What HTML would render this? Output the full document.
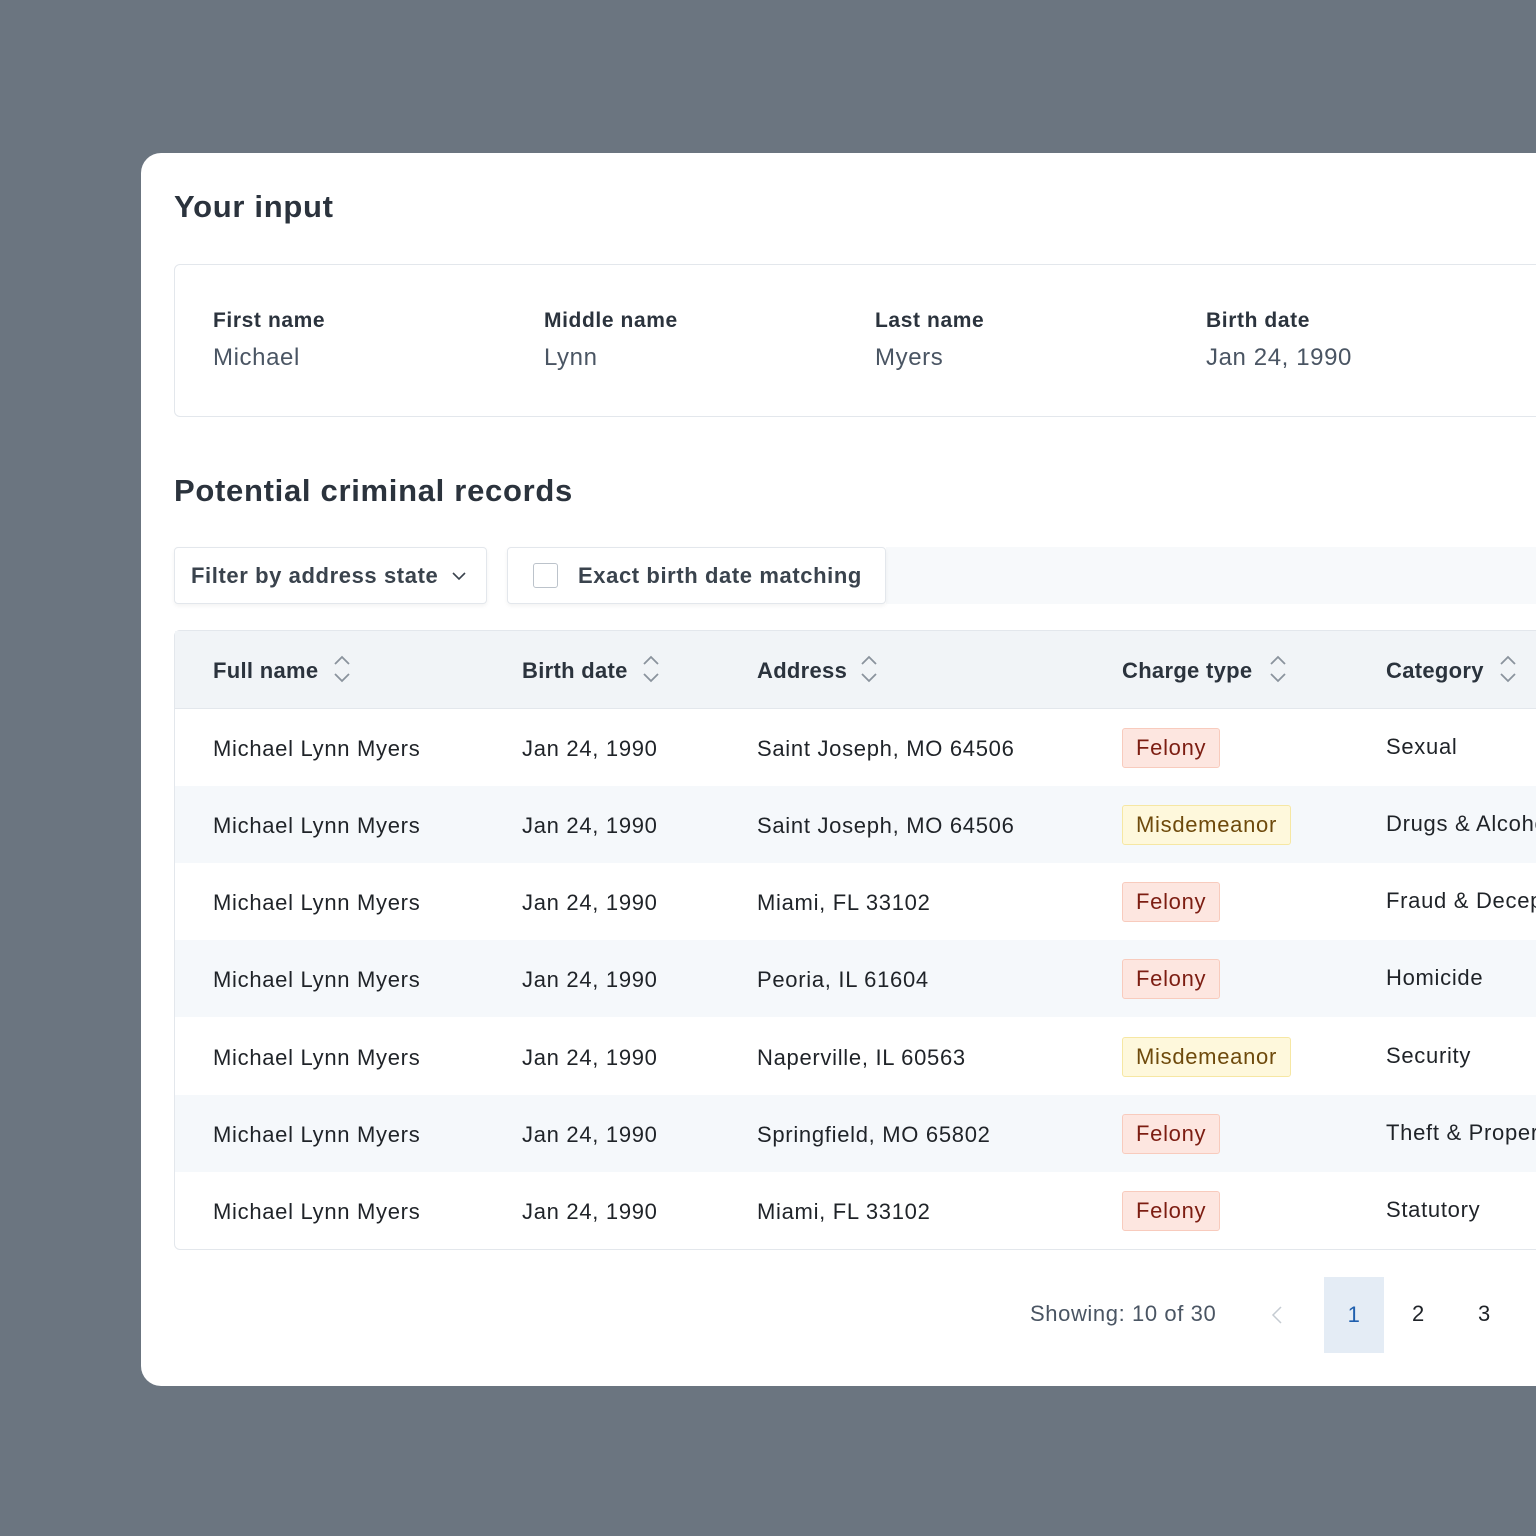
<!DOCTYPE html><html><head><style>
*{margin:0;padding:0;box-sizing:border-box}
body{width:1536px;height:1536px;background:#6b7580;position:relative;overflow:hidden;font-family:"Liberation Sans",sans-serif;color:#1f2328;letter-spacing:0.6px}
.card{position:absolute;left:141px;top:153px;width:1420px;height:1233px;background:#fff;border-radius:20px}
.a{position:absolute;white-space:nowrap}
h2{position:absolute;font-size:31px;font-weight:700;color:#2b333d;letter-spacing:0.7px}
.lbl{font-size:21px;font-weight:700;color:#2b333d}
.val{font-size:24px;color:#4a5563}
.btn{position:absolute;top:547px;height:57px;border:1.5px solid #e3e7ec;border-radius:4px;background:#fff;box-shadow:0 2px 4px rgba(0,0,0,.05);font-size:22px;font-weight:700;color:#3a434d}
.row{position:absolute;left:175px;width:1400px;height:77px;font-size:22px;letter-spacing:0.7px;white-space:nowrap}
.row span{position:absolute;top:27px;white-space:nowrap}
.tag{position:absolute;top:19px;height:40px;border-radius:3px;padding:0 13px;line-height:38px;font-size:22px}
.f{background:#fde6e0;border:1.5px solid #f8cbbd;color:#7c1d12}
.m{background:#fef8dc;border:1.5px solid #f6e7a3;color:#6e4a0c}
.th{position:absolute;top:27px;font-size:22px;font-weight:700;color:#2b333d;letter-spacing:0.3px}
.s{position:absolute;top:22px}
</style></head><body>
<div class="card"></div>
<h2 style="left:174px;top:189px">Your input</h2>
<div class="a" style="left:174px;top:264px;width:1400px;height:153px;border:1.5px solid #e3e7ec;border-radius:6px"></div>
<div class="a lbl" style="left:213px;top:309px">First name</div><div class="a val" style="left:213px;top:344px">Michael</div>
<div class="a lbl" style="left:544px;top:309px">Middle name</div><div class="a val" style="left:544px;top:344px">Lynn</div>
<div class="a lbl" style="left:875px;top:309px">Last name</div><div class="a val" style="left:875px;top:344px">Myers</div>
<div class="a lbl" style="left:1206px;top:309px">Birth date</div><div class="a val" style="left:1206px;top:344px">Jan 24, 1990</div>
<h2 style="left:174px;top:473px">Potential criminal records</h2>
<div class="a" style="left:886px;top:547px;width:700px;height:57px;background:#f7f9fb"></div>
<div class="btn" style="left:174px;width:313px"><span class="a" style="left:16px;top:15px">Filter by address state</span>
<svg class="a" style="left:276px;top:22px" width="16" height="12"><path d="M2 3l6 6 6-6" fill="none" stroke="#3a434d" stroke-width="1.6"/></svg></div>
<div class="btn" style="left:507px;width:379px"><div class="a" style="left:25px;top:15px;width:25px;height:25px;border:1.5px solid #bcc3cb;border-radius:3px"></div><span class="a" style="left:70px;top:15px">Exact birth date matching</span></div>
<div class="a" style="left:174px;top:630px;width:1400px;height:620px;border:1.5px solid #e3e7ec;border-radius:6px"></div>
<div class="row" style="top:631px;background:#f1f4f7;border-bottom:1.5px solid #e3e7ec;height:78px">
<span class="th" style="left:38px">Full name</span><svg class="s" style="left:157px" width="20" height="32"><path d="M3 11l7-7 7 7M3 21l7 7 7-7" fill="none" stroke="#8a939d" stroke-width="1.8"/></svg>
<span class="th" style="left:347px">Birth date</span><svg class="s" style="left:466px" width="20" height="32"><path d="M3 11l7-7 7 7M3 21l7 7 7-7" fill="none" stroke="#8a939d" stroke-width="1.8"/></svg>
<span class="th" style="left:582px">Address</span><svg class="s" style="left:684px" width="20" height="32"><path d="M3 11l7-7 7 7M3 21l7 7 7-7" fill="none" stroke="#8a939d" stroke-width="1.8"/></svg>
<span class="th" style="left:947px">Charge type</span><svg class="s" style="left:1093px" width="20" height="32"><path d="M3 11l7-7 7 7M3 21l7 7 7-7" fill="none" stroke="#8a939d" stroke-width="1.8"/></svg>
<span class="th" style="left:1211px">Category</span><svg class="s" style="left:1323px" width="20" height="32"><path d="M3 11l7-7 7 7M3 21l7 7 7-7" fill="none" stroke="#8a939d" stroke-width="1.8"/></svg>
</div>
<div class="row" style="top:709px"><span style="left:38px">Michael Lynn Myers</span><span style="left:347px">Jan 24, 1990</span><span style="left:582px">Saint Joseph, MO 64506</span><div class="tag f" style="left:947px">Felony</div><span style="left:1211px;top:25px">Sexual</span></div>
<div class="row" style="top:786px;background:#f5f8fb"><span style="left:38px">Michael Lynn Myers</span><span style="left:347px">Jan 24, 1990</span><span style="left:582px">Saint Joseph, MO 64506</span><div class="tag m" style="left:947px">Misdemeanor</div><span style="left:1211px;top:25px">Drugs &amp; Alcohol</span></div>
<div class="row" style="top:863px"><span style="left:38px">Michael Lynn Myers</span><span style="left:347px">Jan 24, 1990</span><span style="left:582px">Miami, FL 33102</span><div class="tag f" style="left:947px">Felony</div><span style="left:1211px;top:25px">Fraud &amp; Deception</span></div>
<div class="row" style="top:940px;background:#f5f8fb"><span style="left:38px">Michael Lynn Myers</span><span style="left:347px">Jan 24, 1990</span><span style="left:582px">Peoria, IL 61604</span><div class="tag f" style="left:947px">Felony</div><span style="left:1211px;top:25px">Homicide</span></div>
<div class="row" style="top:1018px"><span style="left:38px">Michael Lynn Myers</span><span style="left:347px">Jan 24, 1990</span><span style="left:582px">Naperville, IL 60563</span><div class="tag m" style="left:947px">Misdemeanor</div><span style="left:1211px;top:25px">Security</span></div>
<div class="row" style="top:1095px;background:#f5f8fb"><span style="left:38px">Michael Lynn Myers</span><span style="left:347px">Jan 24, 1990</span><span style="left:582px">Springfield, MO 65802</span><div class="tag f" style="left:947px">Felony</div><span style="left:1211px;top:25px">Theft &amp; Property</span></div>
<div class="row" style="top:1172px;height:76px"><span style="left:38px">Michael Lynn Myers</span><span style="left:347px">Jan 24, 1990</span><span style="left:582px">Miami, FL 33102</span><div class="tag f" style="left:947px">Felony</div><span style="left:1211px;top:25px">Statutory</span></div>
<div class="a" style="left:1030px;top:1301px;font-size:22px;color:#4a5563">Showing: 10 of 30</div>
<svg class="a" style="left:1270px;top:1304px" width="14" height="22"><path d="M11 3l-8 8 8 8" fill="none" stroke="#c5cbd2" stroke-width="1.5"/></svg>
<div class="a" style="left:1324px;top:1277px;width:60px;height:76px;background:#e4ecf5;color:#1f5fae;font-size:22px;text-align:center;line-height:76px">1</div>
<div class="a" style="left:1412px;top:1301px;font-size:22px">2</div>
<div class="a" style="left:1478px;top:1301px;font-size:22px">3</div>
</body></html>
